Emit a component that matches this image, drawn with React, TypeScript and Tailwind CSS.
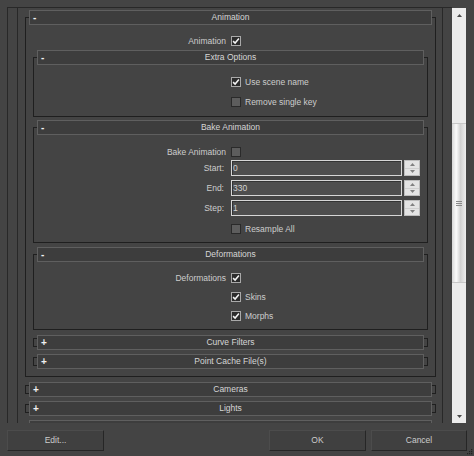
import React from "react";

function Check({ on }: { on: boolean }) {
  return on ? (
    <span className="flex h-[10px] w-[10px] shrink-0 items-center justify-center border border-[#a9a9a9] bg-[#2c2c2c]">
      <svg width="8" height="8" viewBox="0 0 8 8">
        <path d="M1.1 4.1 L3.1 6.1 L6.9 1.5" stroke="#f4f4f4" strokeWidth="1.5" fill="none" />
      </svg>
    </span>
  ) : (
    <span className="h-[10px] w-[10px] shrink-0 border border-[#2a2a2a] bg-[#5d5d5d]" />
  );
}

function Header({ title, sign, className }: { title: string; sign: string; className: string }) {
  return (
    <div className={className}>
      <div className="grid h-[15px] grid-cols-[1fr_auto_1fr] items-center border border-[#5f5f5f] bg-[#3d3d3d] text-[#d6d6d6]">
        <span className="pl-[3px] text-[10px] font-bold leading-[13px] text-[#f0f0f0]">{sign}</span>
        <span className="leading-[13px]">{title}</span>
        <span />
      </div>
    </div>
  );
}

function CheckRow({
  label,
  text,
  on,
  w,
  mt,
}: {
  label?: string;
  text?: string;
  on: boolean;
  w: string;
  mt: string;
}) {
  return (
    <div className={`flex h-[10px] items-center ${mt}`}>
      <div className={`${w} shrink-0 pr-[5px] text-right leading-[10px]`}>{label}</div>
      <Check on={on} />
      {text && <span className="ml-[4px] leading-[10px]">{text}</span>}
    </div>
  );
}

function Spin({ label, value, mt }: { label: string; value: string; mt: string }) {
  return (
    <div className={`flex h-[16px] items-center ${mt}`}>
      <div className="w-[197px] shrink-0 pr-[7px] text-right">{label}</div>
      <div className="flex h-[16px] w-[171px] items-center border border-[#d6d6d6] bg-[#4e4e4e] pl-[1px] text-[#d2d2d2] shadow-[inset_1px_1px_0_#333]">
        {value}
      </div>
      <div className="ml-[2px] flex h-[16px] w-[16px] flex-col border border-[#bcbcbc] bg-[#e3e3e3]">
        <div className="flex flex-1 items-center justify-center border-b border-[#cfcfcf]">
          <svg width="5" height="3" viewBox="0 0 5 3">
            <path d="M0 3 L2.5 0 L5 3 Z" fill="#808080" />
          </svg>
        </div>
        <div className="flex flex-1 items-center justify-center">
          <svg width="5" height="3" viewBox="0 0 5 3">
            <path d="M0 0 L2.5 3 L5 0 Z" fill="#808080" />
          </svg>
        </div>
      </div>
    </div>
  );
}

function Collapsed({ title, sign, wrap, head }: { title: string; sign: string; wrap: string; head: string }) {
  return (
    <div className={`relative ${wrap}`}>
      <div className="absolute inset-x-0 bottom-[3px] top-[3px] border border-[#1f1f1f]" />
      <Header title={title} sign={sign} className={`relative ${head}`} />
    </div>
  );
}

export default function App() {
  return (
    <div className="relative h-[456px] w-[474px] overflow-hidden bg-[#444444] font-['Liberation_Sans',Arial,sans-serif] text-[8.5px] text-[#cdcdcd]">
      <div className="flex pl-[7px] pt-[7px]">
        <div className="flex h-[416px] w-[445px] border-l border-t border-[#282828]">
          <div className="ml-[9px] h-[415px] w-[426px] overflow-hidden border-l border-r border-[#282828]">
            {/* Animation rollout */}
            <div className="ml-[7px] mt-[9px] w-[411px] border border-[#1f1f1f] pb-[7px]">
              <Header title="Animation" sign="-" className="mx-[3px] -mt-[8px]" />
              <CheckRow label="Animation" on w="w-[205px]" mt="mt-[11px]" />

              {/* Extra Options */}
              <div className="mx-[7px] mt-[11px] border border-[#1f1f1f] pb-[9px]">
                <Header title="Extra Options" sign="-" className="mx-[3px] -mt-[8px]" />
                <CheckRow text="Use scene name" on w="w-[197px]" mt="mt-[12px]" />
                <CheckRow text="Remove single key" on={false} w="w-[197px]" mt="mt-[10px]" />
              </div>

              {/* Bake Animation */}
              <div className="mx-[7px] mt-[10px] border border-[#1f1f1f] pb-[8px]">
                <Header title="Bake Animation" sign="-" className="mx-[3px] -mt-[8px]" />
                <CheckRow label="Bake Animation" on={false} w="w-[197px]" mt="mt-[12px]" />
                <Spin label="Start:" value="0" mt="mt-[3px]" />
                <Spin label="End:" value="330" mt="mt-[4px]" />
                <Spin label="Step:" value="1" mt="mt-[4px]" />
                <CheckRow text="Resample All" on={false} w="w-[197px]" mt="mt-[8px]" />
              </div>

              {/* Deformations */}
              <div className="mx-[7px] mt-[11px] border border-[#1f1f1f] pb-[8px]">
                <Header title="Deformations" sign="-" className="mx-[3px] -mt-[8px]" />
                <CheckRow label="Deformations" on w="w-[197px]" mt="mt-[11px]" />
                <CheckRow text="Skins" on w="w-[197px]" mt="mt-[9px]" />
                <CheckRow text="Morphs" on w="w-[197px]" mt="mt-[9px]" />
              </div>

              <Collapsed title="Curve Filters" sign="+" wrap="mx-[7px] mt-[5px]" head="mx-[4px]" />
              <Collapsed title="Point Cache File(s)" sign="+" wrap="mx-[7px] mt-[4px]" head="mx-[4px]" />
            </div>

            <Collapsed title="Cameras" sign="+" wrap="ml-[7px] w-[411px] mt-[5px]" head="mx-[4px]" />
            <Collapsed title="Lights" sign="+" wrap="ml-[7px] w-[411px] mt-[4px]" head="mx-[4px]" />
            <Collapsed title="" sign="" wrap="ml-[7px] w-[411px] mt-[4px]" head="mx-[4px]" />
          </div>
        </div>

        {/* Scrollbar */}
        <div className="mt-[1px] flex h-[415px] w-[14px] flex-col bg-[#ececec]">
          <div className="flex h-[14px] items-center justify-center">
            <svg width="5" height="3" viewBox="0 0 5 3">
              <path d="M0 3 L2.5 0 L5 3 Z" fill="#4a4a4a" />
            </svg>
          </div>
          <div className="flex-1">
            <div className="mt-[101px] flex h-[160px] flex-col items-center justify-center gap-[1px] border-y border-[#c8c8c8] bg-[linear-gradient(to_right,#d6d6d6,#fbfbfb_30%,#d2d2d2_60%,#eeeeee)]">
              <div className="h-[1px] w-[6px] bg-[#8a8a8a]" />
              <div className="h-[1px] w-[6px] bg-[#8a8a8a]" />
              <div className="h-[1px] w-[6px] bg-[#8a8a8a]" />
            </div>
          </div>
          <div className="flex h-[14px] items-center justify-center">
            <svg width="5" height="3" viewBox="0 0 5 3">
              <path d="M0 0 L2.5 3 L5 0 Z" fill="#4a4a4a" />
            </svg>
          </div>
        </div>
      </div>

      {/* Buttons */}
      <div className="mt-[7px] flex pl-[7px]">
        <div className="flex h-[21px] w-[97px] items-center justify-center border border-b-[#262626] border-l-[#4c4c4c] border-r-[#262626] border-t-[#4c4c4c] bg-[#404040] text-[#cccccc]">
          Edit...
        </div>
        <div className="ml-[165px] flex h-[21px] w-[97px] items-center justify-center border border-b-[#262626] border-l-[#4c4c4c] border-r-[#262626] border-t-[#4c4c4c] bg-[#404040] text-[#cccccc]">
          OK
        </div>
        <div className="ml-[5px] flex h-[21px] w-[96px] items-center justify-center border border-b-[#262626] border-l-[#4c4c4c] border-r-[#262626] border-t-[#4c4c4c] bg-[#404040] text-[#cccccc]">
          Cancel
        </div>
      </div>

      <svg className="absolute bottom-[1px] right-[1px]" width="7" height="7" viewBox="0 0 7 7">
        <rect x="5" y="1" width="1.2" height="1.2" fill="#222" />
        <rect x="3" y="3" width="1.2" height="1.2" fill="#222" />
        <rect x="5" y="3" width="1.2" height="1.2" fill="#222" />
        <rect x="1" y="5" width="1.2" height="1.2" fill="#222" />
        <rect x="3" y="5" width="1.2" height="1.2" fill="#222" />
        <rect x="5" y="5" width="1.2" height="1.2" fill="#222" />
      </svg>
    </div>
  );
}
